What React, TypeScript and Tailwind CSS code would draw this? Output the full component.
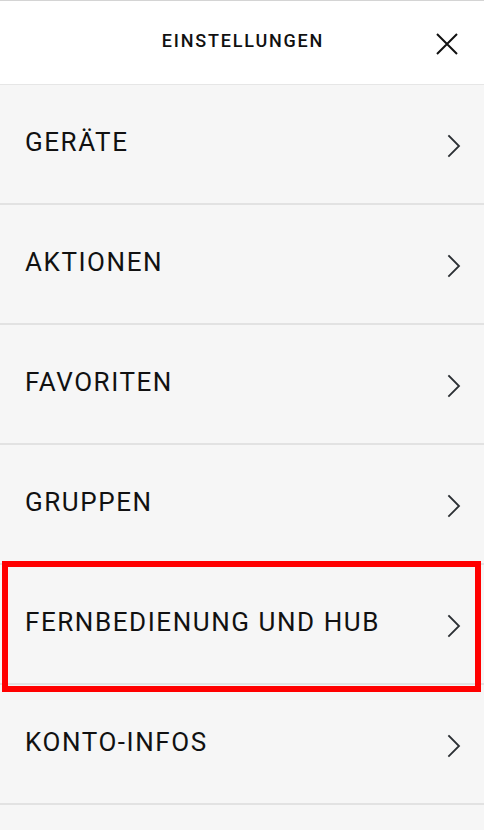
import React from "react";

const items = [
  "GERÄTE",
  "AKTIONEN",
  "FAVORITEN",
  "GRUPPEN",
  "FERNBEDIENUNG UND HUB",
  "KONTO-INFOS",
];

const Chevron = () => (
  <svg width="14" height="24" viewBox="0 0 14 24" fill="none" className="shrink-0">
    <path d="M2 2 L12 12 L2 22" stroke="#2b2f33" strokeWidth="1.8" strokeLinecap="square" />
  </svg>
);

const CloseIcon = () => (
  <svg width="22" height="22" viewBox="0 0 22 22" fill="none">
    <path d="M1 1 L21 21 M21 1 L1 21" stroke="#111" strokeWidth="2" />
  </svg>
);

export default function App() {
  return (
    <div className="relative w-[484px] h-[830px] overflow-hidden bg-[#f6f6f6] font-['Roboto',sans-serif]">
      <header className="h-[85px] bg-white border-t border-b border-t-[#d4d4d4] border-b-[#e6e6e6] flex items-center justify-center relative">
        <h1 className="text-[18px] font-medium tracking-[0.1em] text-[#111] leading-none mb-[4px] pl-[2px]">
          EINSTELLUNGEN
        </h1>
        <button className="absolute right-[26px] top-[32px] p-0">
          <CloseIcon />
        </button>
      </header>
      <ul>
        {items.map((label) => (
          <li
            key={label}
            className="h-[120px] border-b-2 border-[#e2e2e2] flex items-center justify-between pl-[25px] pr-[23px]"
          >
            <span className="text-[26px] tracking-[0.06em] text-[#111] leading-none mb-[4px]">{label}</span>
            <span className="mt-[3px]">
              <Chevron />
            </span>
          </li>
        ))}
      </ul>
      <div className="absolute left-[2px] top-[561px] w-[479px] h-[131px] border-[6px] border-[#ff0000] pointer-events-none" />
    </div>
  );
}
